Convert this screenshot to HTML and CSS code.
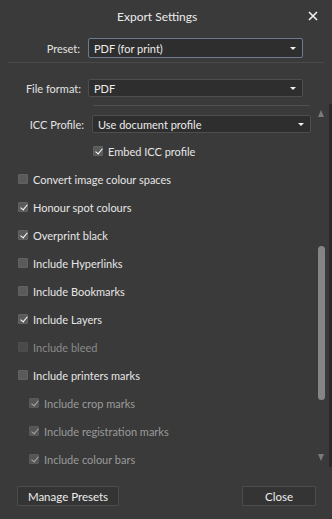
FILE: index.html
```html
<!DOCTYPE html>
<html>
<head>
<meta charset="utf-8">
<link rel="stylesheet" href="styles.css">
</head>
<body>
<div class="dialog">
  <header class="titlebar">
    <h1 class="title">Export Settings</h1>
    <button class="close-x" aria-label="Close">
      <svg width="10" height="10" viewBox="0 0 10 10"><path d="M1 1L9 9M9 1L1 9" stroke="#f2f2f2" stroke-width="1.6" fill="none"/></svg>
    </button>
  </header>

  <div class="field preset">
    <span class="label">Preset:</span>
    <div class="select focus"><span>PDF (for print)</span><i class="caret"></i></div>
  </div>
  <div class="sep"></div>

  <div class="field format">
    <span class="label">File format:</span>
    <div class="select"><span>PDF</span><i class="caret"></i></div>
  </div>

  <div class="scroll">
    <div class="scroll-content">
      <div class="clip-line"></div>
      <div class="field icc">
        <span class="label">ICC Profile:</span>
        <div class="select"><span>Use document profile</span><i class="caret"></i></div>
      </div>
      <div class="check embed"><span class="box on"></span><span>Embed ICC profile</span></div>
      <div class="check"><span class="box"></span><span>Convert image colour spaces</span></div>
      <div class="check"><span class="box on"></span><span>Honour spot colours</span></div>
      <div class="check"><span class="box on"></span><span>Overprint black</span></div>
      <div class="check"><span class="box"></span><span>Include Hyperlinks</span></div>
      <div class="check"><span class="box"></span><span>Include Bookmarks</span></div>
      <div class="check"><span class="box on"></span><span>Include Layers</span></div>
      <div class="check disabled"><span class="box"></span><span>Include bleed</span></div>
      <div class="check"><span class="box"></span><span>Include printers marks</span></div>
      <div class="check sub disabled"><span class="box on"></span><span>Include crop marks</span></div>
      <div class="check sub disabled"><span class="box on"></span><span>Include registration marks</span></div>
      <div class="check sub disabled"><span class="box on"></span><span>Include colour bars</span></div>
    </div>
    <div class="scrollbar">
      <i class="arrow up"></i>
      <div class="track"><div class="thumb"></div></div>
      <i class="arrow down"></i>
    </div>
    <div class="edge"></div>
  </div>

  <footer class="footer">
    <button class="btn">Manage Presets</button>
    <button class="btn close">Close</button>
  </footer>
</div>
</body>
</html>
```

FILE: styles.css
```css
* { box-sizing: border-box; }
html, body { margin: 0; padding: 0; }
body {
  width: 332px;
  height: 519px;
  overflow: hidden;
  background: #3a3a3a;
  font-family: Lato, "Open Sans", sans-serif;
  font-size: 11px;
  color: #e6e6e6;
}
.dialog { width: 332px; height: 519px; display: flex; flex-direction: column; }

.titlebar {
  height: 32px;
  display: flex;
  align-items: center;
  padding-left: 117px;
  padding-right: 14px;
}
.title {
  margin: 0;
  flex: 1;
  font-size: 12px;
  font-weight: normal;
  color: #ececec;
}
.close-x {
  border: 0; background: none; padding: 0;
  width: 10px; height: 10px;
  display: flex;
}

.field { display: flex; align-items: center; }
.label { text-align: right; color: #e2e2e2; }
.select {
  display: flex; align-items: center; justify-content: space-between;
  background: #2e2e2e;
  border: 1px solid #4e4e4e;
  border-radius: 2px;
  padding: 0 6px 0 5px;
  color: #ececec;
}
.select.focus { border-color: #6d7a94; }
.caret {
  width: 0; height: 0;
  border-left: 3px solid transparent;
  border-right: 3px solid transparent;
  border-top: 3px solid #f0f0f0;
}

.preset { margin-top: 6px; }
.preset .label { width: 80px; margin-right: 8px; }
.preset .select { width: 215px; height: 20px; }

.sep { height: 1px; background: #4a4a4a; margin: 4px 8px 0 8px; }

.format { margin-top: 16px; }
.format .label { width: 81px; margin-right: 7px; }
.format .select { width: 215px; height: 18px; }

.scroll {
  margin-top: 7px;
  height: 363px;
  display: flex;
  overflow: hidden;
}
.scroll-content { width: 313px; overflow: hidden; padding-top: 1px; }
.clip-line { height: 1px; background: #505050; margin-left: 93px; width: 217px; }

.icc { margin-top: 9px; }
.icc .label { width: 84px; margin-right: 8px; }
.icc .select { width: 219px; height: 18px; }

.check {
  height: 28px;
  display: flex;
  align-items: center;
  padding-left: 18px;
  gap: 5px;
}
.check.embed { margin-top: 4px; padding-left: 93px; }
.check.sub { padding-left: 29px; }
.box {
  width: 10px; height: 10px;
  background: #5a5a5a;
  border: 1px solid #626262;
  border-radius: 1px;
  position: relative;
  flex: none;
}
.box.on::after {
  content: "";
  position: absolute;
  left: 2.5px; top: 0px;
  width: 3px; height: 6px;
  border-right: 1.6px solid #ffffff;
  border-bottom: 1.6px solid #ffffff;
  transform: rotate(40deg);
}
.check.disabled { color: #8a8a8a; }
.check.disabled .box { background: #4a4a4a; border-color: #4e4e4e; }
.check.sub .box { background: #555; border-color: #5a5a5a; }
.check.sub .box.on::after { border-color: #a8a8a8; }
.check.sub.disabled { color: #9a9a9a; }

.scrollbar {
  width: 16px;
  display: flex;
  flex-direction: column;
  align-items: center;
  padding-top: 6px;
}
.arrow {
  width: 0; height: 0;
  border-left: 3.5px solid transparent;
  border-right: 3.5px solid transparent;
}
.arrow.up { border-bottom: 7px solid #7a7a7a; }
.arrow.down { border-top: 7px solid #7a7a7a; margin-top: 0; }
.track { height: 337px; padding-top: 129px; }
.thumb { width: 7px; height: 154px; background: #858585; border-radius: 4px; }
.edge { width: 3px; background: #2a2a2a; }

.footer {
  display: flex;
  justify-content: space-between;
  padding: 19px 16px 0 17px;
}
.btn {
  height: 20px;
  background: #343434;
  border: 1px solid #4c4c4c;
  border-radius: 1px;
  color: #ececec;
  font-family: Lato, "Open Sans", sans-serif;
  font-size: 11.5px;
  padding: 0;
  line-height: 17px;
}
.btn { width: 102px; }
.btn.close { width: 74px; }
```
